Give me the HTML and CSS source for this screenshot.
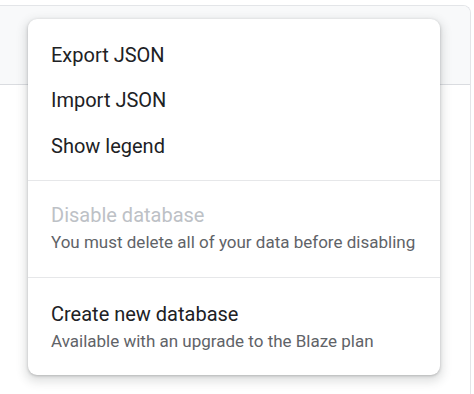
FILE: index.html
```html
<!DOCTYPE html>
<html>
<head>
<meta charset="utf-8">
<link rel="stylesheet" href="styles.css">
</head>
<body>
<div class="card">
  <div class="card-head"></div>
</div>
<div class="menu">
  <div class="group">
    <div class="item">Export JSON</div>
    <div class="item">Import JSON</div>
    <div class="item">Show legend</div>
  </div>
  <div class="group two">
    <div class="title disabled">Disable database</div>
    <div class="sub">You must delete all of your data before disabling</div>
  </div>
  <div class="group two last">
    <div class="title">Create new database</div>
    <div class="sub">Available with an upgrade to the Blaze plan</div>
  </div>
</div>
</body>
</html>
```
FILE: styles.css
```css
html, body {
  margin: 0;
  padding: 0;
  background: #ffffff;
  width: 474px;
  height: 394px;
  overflow: hidden;
  font-family: Roboto, "Noto Sans", sans-serif;
}
.card {
  box-sizing: border-box;
  margin: 5px 3px 0 -12px;
  height: 389px;
  border: 1px solid #e3e5e8;
  border-bottom: none;
  border-radius: 8px 8px 0 0;
  background: #ffffff;
  overflow: hidden;
}
.card-head {
  height: 78px;
  background: #f8f9fa;
  border-bottom: 1px solid #dadce0;
}
.menu {
  position: absolute;
  left: 28px;
  top: 19px;
  width: 412px;
  background: #ffffff;
  border-radius: 9px;
  box-shadow: 0 1px 3px rgba(60,64,67,0.3), 0 4px 10px 3px rgba(60,64,67,0.15);
  display: flex;
  flex-direction: column;
}
.group {
  padding: 13.5px 0 11px;
  border-bottom: 1px solid #e6e7e9;
}
.item {
  height: 45.5px;
  line-height: 45.5px;
  padding: 0 23px;
  font-size: 20px;
  color: #202124;
}
.group.two {
  padding: 21px 23px 22px;
}
.group.two.last {
  padding: 23px 23px 21px;
  border-bottom: none;
}
.title {
  font-size: 20px;
  line-height: 27px;
  color: #202124;
}
.title.disabled {
  color: #bdc1c6;
}
.sub {
  font-size: 17px;
  line-height: 26px;
  color: #5f6368;
}
```
